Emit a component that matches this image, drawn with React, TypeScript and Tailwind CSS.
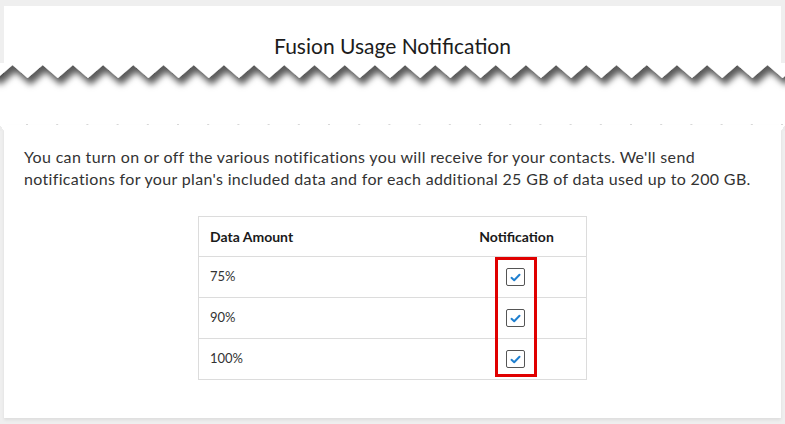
import React from "react";

const rows = ["75%", "90%", "100%"];

function TornEdge() {
    // upper paper edge: peaks every 30.2px, drop shadow falls on the lower piece
    const period = 30.2;
    const pts: string[] = [];
    for (let i = -1; i < 28; i++) {
        const x = 12.5 + i * period;
        pts.push(`${x},2`);
        pts.push(`${x + period / 2},15`);
    }
    const upper = `-20,-30 ${pts.join(" ")} 820,-30`;
    const dots = Array.from({ length: 26 }, (_, i) => 26 + i * period);

    return (
        <svg width="785" height="62" viewBox="0 0 785 62" className="block">
            <defs>
                <filter id="tear" x="-5%" y="-50%" width="110%" height="200%">
                    <feDropShadow dx="3" dy="7" stdDeviation="3.2" floodColor="#000" floodOpacity="0.65" />
                </filter>
            </defs>
            <rect x="0" y="0" width="785" height="62" fill="#ffffff" />
            <polygon points="0,-1 4,-1 4,12 0,16" fill="#ececec" />
            <polygon points="781,-1 785,-1 785,16 781,12" fill="#ececec" />
            <polygon points={upper} fill="#ffffff" filter="url(#tear)" />
            {dots.map((x) => (
                <rect key={x} x={x} y="61" width="2" height="1" fill="#d8d8d8" />
            ))}
        </svg>
    );
}

function Check() {
    return (
        <span className="flex w-[19px] h-[18px] items-center justify-center rounded-[2px] border-[1.5px] border-[#555] bg-white">
            <svg width="11" height="9" viewBox="0 0 11 9">
                <path d="M1.5 4.8 L4.2 7.2 L9.5 1.8" fill="none" stroke="#1f7fcf" strokeWidth="2" strokeLinecap="round" strokeLinejoin="round" />
            </svg>
        </span>
    );
}

export default function App() {
    return (
        <div className="w-[785px] h-[424px] bg-[#efefef] flex flex-col overflow-hidden" style={{ fontFamily: "Lato, 'Open Sans', sans-serif" }}>
            {/* header piece */}
            <div className="mx-[4px] mt-[6px] h-[57px] bg-white flex justify-center pt-[27px]">
                <h1 className="text-[21px] leading-[26px] text-[#1c1c1c]">Fusion Usage Notification</h1>
            </div>

            <TornEdge />

            {/* body piece */}
            <div className="relative mx-[4px] mb-[6px] flex-1 bg-white px-[20px] pt-[21px] shadow-[0_2px_3px_rgba(0,0,0,0.08)]">
                <div className="absolute left-[-4px] top-0 h-[6px] w-[4px] bg-[linear-gradient(to_bottom_left,#ffffff_50%,#ececec_50%)]" />
                <div className="absolute right-[-4px] top-0 h-[6px] w-[4px] bg-[linear-gradient(to_bottom_right,#ffffff_50%,#ececec_50%)]" />
                <p className="text-[16px] leading-[22px] tracking-[0.33px] text-[#333]">
                    You can turn on or off the various notifications you will receive for your contacts. We'll send notifications for your plan's included data and for each additional 25 GB of data used up to 200 GB.
                </p>

                <div className="relative mx-auto mt-[26px] w-[389px] border border-[#dcdcdc]">
                    <div className="flex h-[39px] items-center text-[14px] font-bold text-[#1a1a1a]">
                        <div className="w-[248px] pl-[11px]">Data Amount</div>
                        <div className="flex-1 text-center">Notification</div>
                    </div>
                    {rows.map((r) => (
                        <div key={r} className="flex h-[41px] items-center border-t border-[#dcdcdc] text-[13px] text-[#333]">
                            <div className="w-[248px] pl-[11px]">{r}</div>
                            <div className="flex flex-1 justify-center pr-[3px]">
                                <Check />
                            </div>
                        </div>
                    ))}
                    <div className="absolute left-[296px] top-[40px] h-[120px] w-[42px] border-[3px] border-[#e00000]" />
                </div>
            </div>
        </div>
    );
}
